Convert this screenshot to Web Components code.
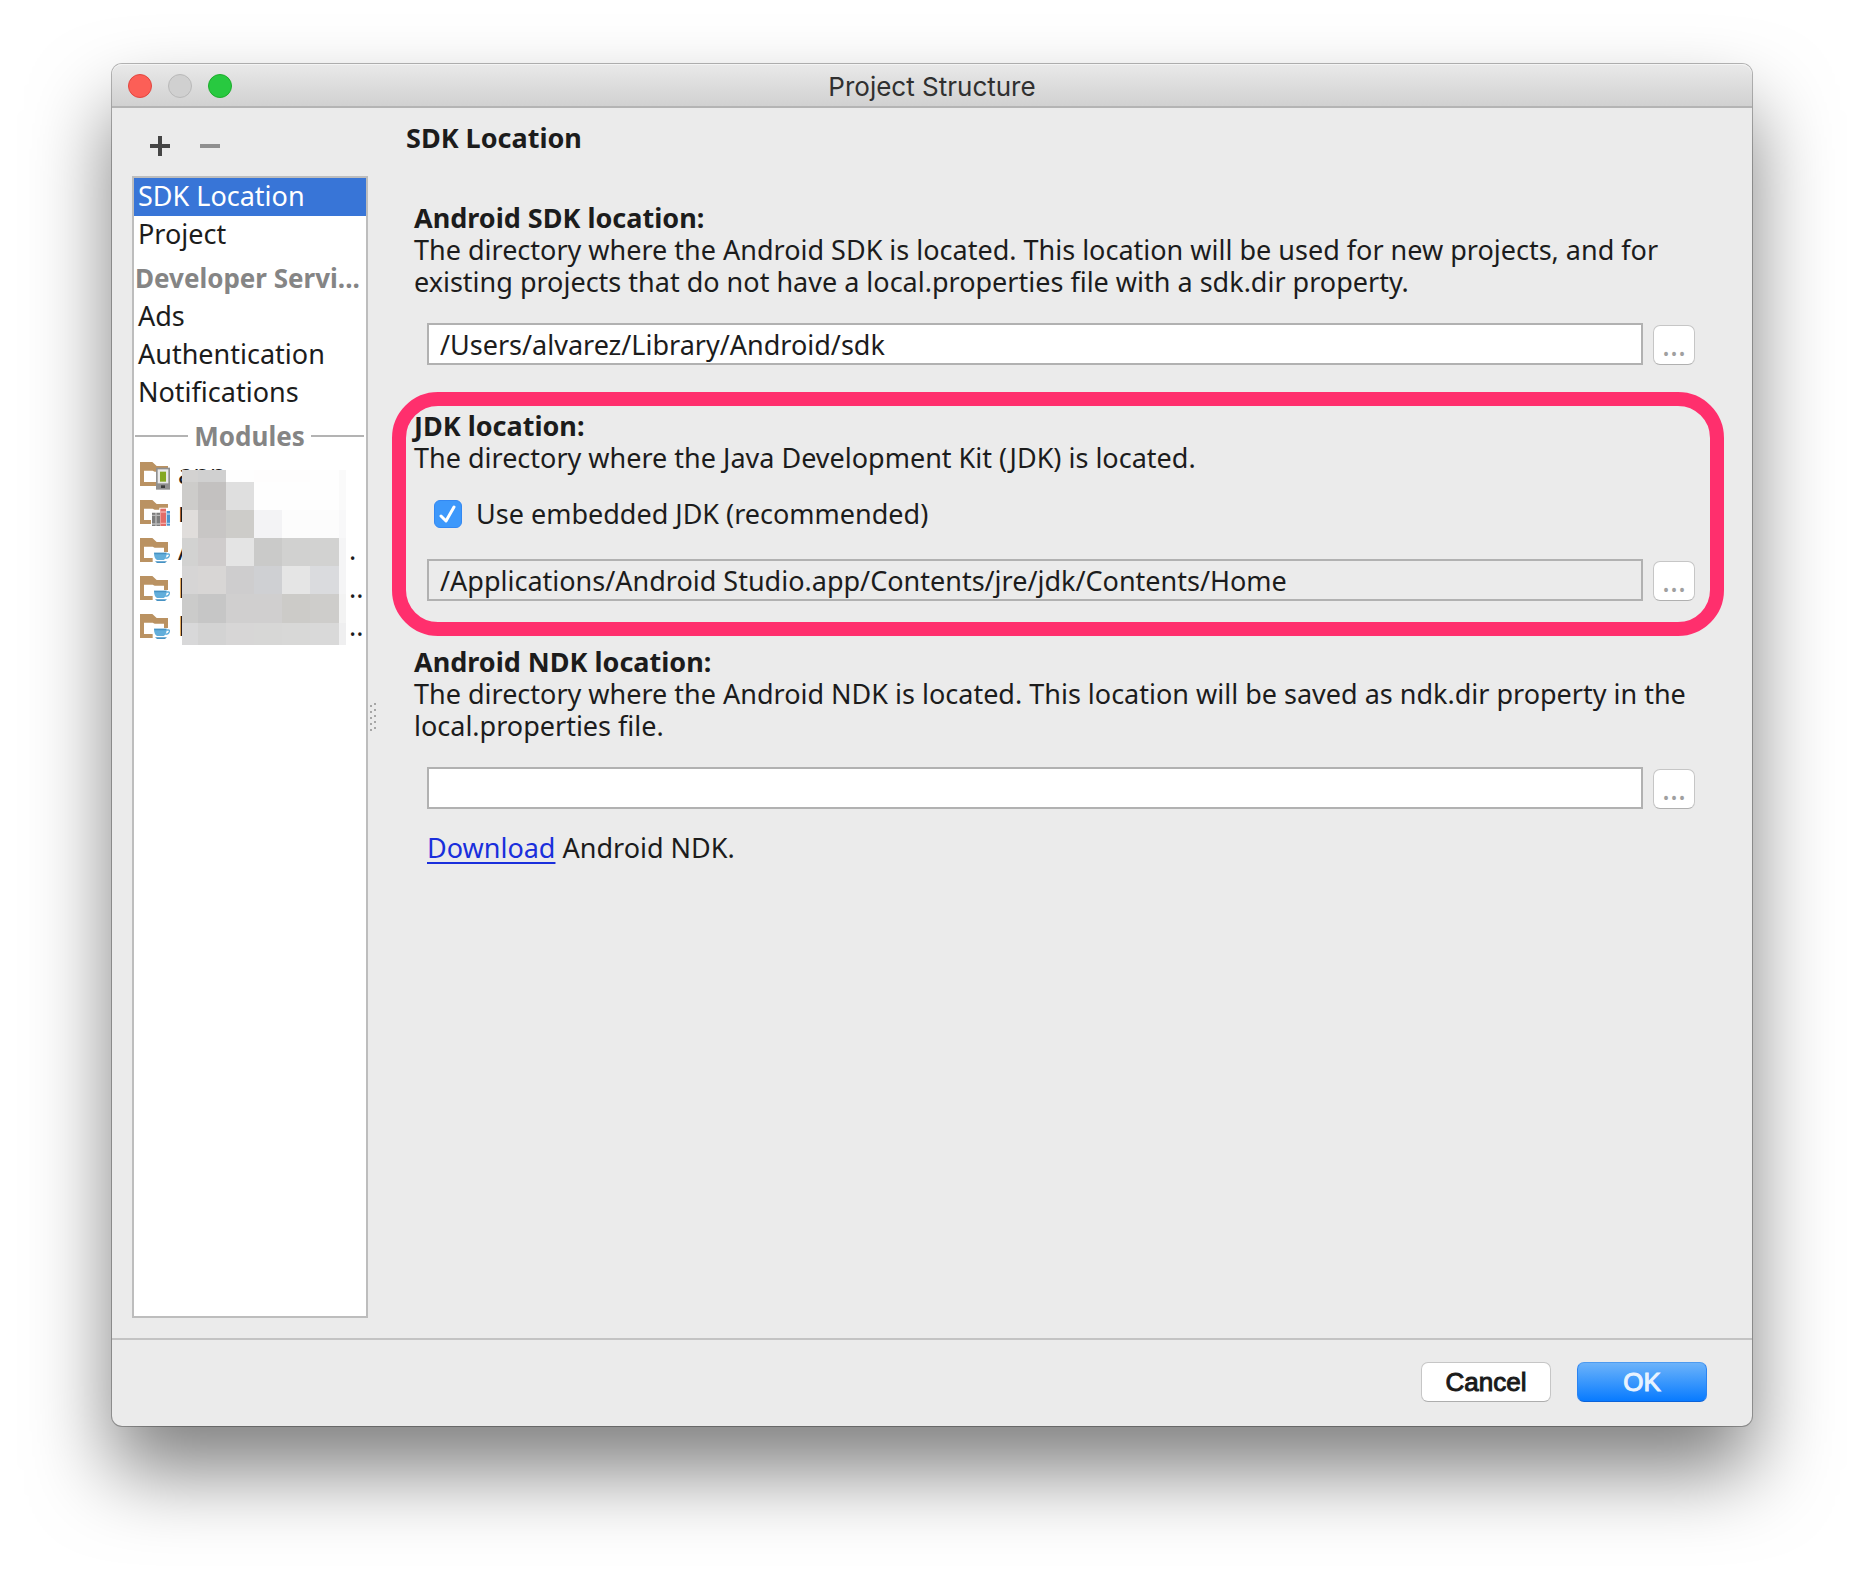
<!DOCTYPE html>
<html lang="en">
<head>
<meta charset="utf-8">
<title>Project Structure</title>
<style>
    body {
        margin: 0;
        background: #fff;
        color: #1c1c1c;
        font: 400 27px/32px "Noto Sans", "Open Sans", sans-serif;
    }
</style>
</head>
<body>
<dialog-window heading="Project Structure">
    <module-sidebar slot="sidebar">
        <nav-row selected>SDK Location</nav-row>
        <nav-row>Project</nav-row>
        <nav-separator>Developer Servi...</nav-separator>
        <nav-row>Ads</nav-row>
        <nav-row>Authentication</nav-row>
        <nav-row>Notifications</nav-row>
        <nav-separator ruled>Modules</nav-separator>
        <nav-row icon="phone">app</nav-row>
        <nav-row icon="library">m</nav-row>
        <nav-row icon="cup">A<span slot="tail">.</span></nav-row>
        <nav-row icon="cup">E<span slot="tail">..</span></nav-row>
        <nav-row icon="cup">E<span slot="tail">..</span></nav-row>
    </module-sidebar>

    <settings-page heading="SDK Location">
        <location-section heading="Android SDK location:" value="/Users/alvarez/Library/Android/sdk">
            <span slot="description">The directory where the Android SDK is located. This location will be used for new projects, and for<br>existing projects that do not have a local.properties file with a sdk.dir property.</span>
        </location-section>
        <location-section heading="JDK location:" value="/Applications/Android Studio.app/Contents/jre/jdk/Contents/Home" locked highlighted>
            <span slot="description">The directory where the Java Development Kit (JDK) is located.</span>
            <check-option slot="option" label="Use embedded JDK (recommended)" checked></check-option>
        </location-section>
        <location-section heading="Android NDK location:" value="">
            <span slot="description">The directory where the Android NDK is located. This location will be saved as ndk.dir property in the<br>local.properties file.</span>
            <download-note slot="footer" link="Download">Android NDK.</download-note>
        </location-section>
    </settings-page>

    <push-button slot="actions" label="Cancel"></push-button>
    <push-button slot="actions" label="OK" variant="primary"></push-button>
</dialog-window>

<script>
/**
 * Small base class: renders template() into an open shadow root.
 */
class BaseElement extends HTMLElement {
    constructor() {
        super();
        this.attachShadow({ mode: "open" });
    }

    connectedCallback() {
        this.shadowRoot.innerHTML = this.template();
    }

    attr(name) {
        return this.getAttribute(name) || "";
    }
}

/**
 * Dialog frame with title bar, sidebar, content and action bar.
 *
 * Slots: sidebar, default, actions
 */
class DialogWindow extends BaseElement {
    template() {
        return `
      <style>
        :host {
          display: flex;
          box-sizing: border-box;
          min-height: 100vh;
          padding: 64px 112px 160px;
        }

        .window {
          flex: 1;
          min-width: 0;
          display: flex;
          flex-direction: column;
          border-radius: 10px;
          background: #ebebeb;
          box-shadow: 0 0 0 1px rgba(0, 0, 0, 0.28), 0 45px 80px rgba(0, 0, 0, 0.5);
        }

        header {
          display: grid;
          grid-template-columns: 1fr auto 1fr;
          align-items: center;
          box-sizing: border-box;
          height: 44px;
          padding: 2px 16px 0;
          border-bottom: 2px solid #b4b4b4;
          border-radius: 10px 10px 0 0;
          background: linear-gradient(#e9e9e9, #d1d1d1);
          box-shadow: inset 0 1px #f4f4f4;
        }

        .lights {
          display: flex;
          gap: 16px;
        }

        .lights button {
          width: 24px;
          height: 24px;
          padding: 0;
          border: 1px solid #b9b9b9;
          border-radius: 50%;
          background: #d0d0d0;
        }

        .lights .close {
          border-color: #e2463f;
          background: #fc5f57;
        }

        .lights .zoom {
          border-color: #1dad2b;
          background: #28c940;
        }

        h1 {
          margin: 0;
          padding-top: 2px;
          color: #303030;
          font: 400 26px/32px Inter, Roboto, sans-serif;
        }

        .body {
          flex: 1;
          display: flex;
        }

        main {
          flex: 1;
          min-width: 0;
        }

        .grip {
          align-self: center;
          flex: none;
          width: 6px;
          height: 28px;
          margin: 0 0 12px 2px;
          fill: #a6a6a6;
        }

        footer {
          display: flex;
          justify-content: flex-end;
          gap: 26px;
          padding: 22px 45px 24px;
          border-top: 2px solid #c3c3c3;
        }
      </style>
      <div class="window">
        <header>
          <div class="lights">
            <button class="close" type="button" aria-label="Close"></button>
            <button type="button" aria-label="Minimize" disabled></button>
            <button class="zoom" type="button" aria-label="Zoom"></button>
          </div>
          <h1>${this.attr("heading")}</h1>
        </header>
        <div class="body">
          <slot name="sidebar"></slot>
          <svg class="grip" viewBox="0 0 6 28">
            ${[0, 6, 12, 18, 24].map((y) => `<rect y="${y + 2}" width="2" height="2"/><rect x="4" y="${y}" width="2" height="2"/>`).join("")}
          </svg>
          <main><slot></slot></main>
        </div>
        <footer><slot name="actions"></slot></footer>
      </div>
    `;
    }
}

/**
 * Left column: add/remove toolbar and the list.
 */
class ModuleSidebar extends BaseElement {
    template() {
        // column and row edges of the mosaic over the module names
        const xs = [0, 16, 44, 72, 100, 128, 157, 164];
        const ys = [0, 12, 40, 68, 96, 124, 153, 175];
        const colors = [
            ["#d3d2d1", "#d0d0d0", "#fefefe", "#fefdfd", "#fefdfd", "#fefefe", "#fafafa"],
            ["#cdccca", "#c3c1c0", "#dfdfdf", "#fefefe", "#fefefe", "#fefefe", "#fafafa"],
            ["#e0dddb", "#c8c6c5", "#cdccc9", "#f3f3f5", "#fcfcfc", "#fcfcfc", "#f8f8f9"],
            ["#d2d2d1", "#cfcccc", "#e4e4e4", "#cacac9", "#d1d1d0", "#d2d2d1", "#f5f5f6"],
            ["#d6d5d5", "#d8d6d5", "#cecdce", "#cfd0d3", "#e5e5e5", "#dadbde", "#f5f5f6"],
            ["#cbcbca", "#c6c6c6", "#d0cfcf", "#d0cfcf", "#cccbc8", "#cecdcb", "#f3f3f3"],
            ["#d8d8d9", "#d3d3d3", "#d7d6d6", "#d7d7d6", "#d8d8d7", "#d9d9d9", "#efeff0"],
        ];
        const cells = colors.map((row, r) => row.map((color, c) =>
            `<rect x="${xs[c]}" y="${ys[r]}" width="${xs[c + 1] - xs[c]}" height="${ys[r + 1] - ys[r]}" fill="${color}"/>`
        ).join("")).join("");

        return `
      <style>
        :host {
          flex: none;
          display: flex;
          flex-direction: column;
          width: 236px;
          padding: 18px 0 20px 20px;
        }

        .toolbar {
          display: flex;
          gap: 10px;
          height: 40px;
          margin-bottom: 10px;
          padding-left: 8px;
        }

        .toolbar button {
          display: grid;
          place-items: center;
          width: 40px;
          height: 40px;
          padding: 0;
          border: 0;
          background: none;
        }

        .list {
          position: relative;
          flex: 1;
          border: 2px solid #bdbdbd;
          background: #fff;
        }

        .mosaic {
          position: absolute;
          top: 292px;
          left: 48px;
        }
      </style>
      <div class="toolbar">
        <button type="button" aria-label="Add">
          <svg width="20" height="20" fill="#454545"><path d="M8 0h4v8h8v4h-8v8H8v-8H0V8h8z"/></svg>
        </button>
        <button type="button" aria-label="Remove">
          <svg width="20" height="20" fill="#8f8f8f"><path d="M0 8h20v4H0z"/></svg>
        </button>
      </div>
      <div class="list">
        <slot></slot>
        <svg class="mosaic" width="164" height="175" shape-rendering="crispEdges">${cells}</svg>
      </div>
    `;
    }
}

// badges drawn over the lower right corner of the folder
const BADGES = {
    phone: `
      <rect x="48" y="20" width="42" height="66" fill="#8f8f8f"/>
      <rect x="53" y="25" width="32" height="42" fill="#e9e9e9"/>
      <rect x="60" y="32" width="18" height="30" fill="#85a822"/>
      <rect x="63" y="73" width="12" height="8" fill="#3c3c3c"/>`,
    library: `
      <path fill="#fff" d="M33 38h25V26h32v62H33z"/>
      <path fill="#7d7d7d" d="M36 41h11v40H36zM49 41h11v40H49z"/>
      <path fill="#b9b9b9" d="M36 47h24v4H36zM36 73h24v4H36z"/>
      <path fill="#e26c68" d="M61 29h17v52H61z"/>
      <path fill="#f3aaa6" d="M61 37h17v4H61zM61 71h17v4H61z"/>
      <path fill="#4c94cc" d="M80 36h10v44H80z"/>
      <path fill="#a9cdea" d="M80 43h10v4H80zM80 71h10v4H80z"/>`,
    cup: `
      <path fill="#fff" d="M38 45h52v34H38z"/>
      <path fill="#62aedb" d="M42 47h38c0 12-3 18-9 22h-20c-6-4-9-10-9-22z"/>
      <path fill="#4792c3" d="M42 47h38l-2 5H44zM45 73h36l-6 5H51z"/>
      <path fill="none" stroke="#62aedb" stroke-width="4" d="M78 51h8q3 0 2 5-2 8-12 8"/>`,
};

/**
 * One selectable row of the list.
 */
class NavRow extends BaseElement {
    template() {
        const icon = this.attr("icon");
        const folder = icon ? `
          <svg width="30" height="31" viewBox="0 0 90 93">
            <path fill="#ba9262" fill-rule="evenodd" d="M0 3h37l13 12h34v60H0zM12 29v34h60V32H44l-6-3z"/>
            ${BADGES[icon]}
          </svg>` : "";

        return `
      <style>
        :host {
          display: block;
        }

        button {
          display: flex;
          align-items: center;
          width: 100%;
          height: 38px;
          padding: 0 0 0 4px;
          border: 0;
          background: none;
          color: #1c1c1c;
          font: inherit;
          text-align: left;
          white-space: nowrap;
        }

        :host([selected]) button {
          background: #3875d7;
          color: #fff;
        }

        svg {
          flex: none;
          margin: 2px 8px 0 2px;
        }

        .label,
        .tail {
          padding-bottom: 2px;
        }

        .label {
          flex: 1;
        }

        .tail {
          width: 17px;
        }
      </style>
      <button type="button">${folder}<span class="label"><slot></slot></span><span class="tail"><slot name="tail"></slot></span></button>
    `;
    }
}

/**
 * Grey group caption, with a rule on both sides when "ruled" is set.
 */
class NavSeparator extends BaseElement {
    template() {
        return `
      <style>
        :host {
          display: flex;
          align-items: center;
          gap: 6px;
          height: 44px;
          padding: 4px 2px 0 1px;
          box-sizing: border-box;
          overflow: hidden;
          color: #858585;
          font-size: 26px;
          font-weight: 700;
          white-space: nowrap;
        }

        :host([ruled])::before,
        :host([ruled])::after {
          content: "";
          flex: 1;
          height: 2px;
          background: #b3b3b3;
        }
      </style>
      <slot></slot>
    `;
    }
}

class SettingsPage extends BaseElement {
    template() {
        return `
      <style>
        :host {
          display: block;
          padding: 14px 57px 0 38px;
        }

        h2 {
          margin: 0 0 48px -8px;
          font: inherit;
          font-weight: 700;
        }

        .sections {
          display: flex;
          flex-direction: column;
          gap: 45px;
        }
      </style>
      <h2>${this.attr("heading")}</h2>
      <div class="sections"><slot></slot></div>
    `;
    }
}

/**
 * Caption, description and path field with a browse button.
 *
 * Slots: description, option, footer
 */
class LocationSection extends BaseElement {
    template() {
        const readonly = this.hasAttribute("locked") ? "readonly" : "";

        return `
      <style>
        :host {
          display: block;
          position: relative;
        }

        :host([highlighted])::after {
          content: "";
          position: absolute;
          inset: -18px -29px -35px -22px;
          border: 14px solid #ff2f6d;
          border-radius: 46px;
          pointer-events: none;
        }

        label {
          display: block;
          font-weight: 700;
        }

        .description {
          margin-right: -20px;
        }

        .field {
          display: flex;
          align-items: flex-end;
          gap: 10px;
          margin: 25px 0 0 13px;
        }

        input {
          flex: 1;
          min-width: 0;
          box-sizing: border-box;
          height: 42px;
          padding: 0 11px;
          border: 2px solid #b1b1b1;
          border-radius: 0;
          outline: 0;
          background: #fff;
          color: #1c1c1c;
          font: inherit;
        }

        input[readonly] {
          background: #ebebeb;
        }

        .field button {
          width: 42px;
          height: 40px;
          padding: 0;
          border: 1px solid #c6c6c6;
          border-bottom-color: #b0b0b0;
          border-radius: 7px;
          background: #fff;
          color: #a0a0a0;
          font: 30px/38px "Noto Sans", sans-serif;
        }
      </style>
      <label for="path">${this.attr("heading")}</label>
      <div class="description"><slot name="description"></slot></div>
      <slot name="option"></slot>
      <div class="field">
        <input id="path" type="text" value="${this.attr("value")}" spellcheck="false" ${readonly}>
        <button type="button" aria-label="Browse">...</button>
      </div>
      <slot name="footer"></slot>
    `;
    }
}

class CheckOption extends BaseElement {
    template() {
        const checked = this.hasAttribute("checked") ? "checked" : "";

        return `
      <style>
        :host {
          display: block;
          margin: 24px 0 29px 20px;
        }

        label {
          display: flex;
          align-items: center;
          gap: 14px;
        }

        .box {
          display: grid;
        }

        input,
        svg {
          grid-area: 1 / 1;
          width: 28px;
          height: 28px;
          margin: 0;
        }

        input {
          appearance: none;
          border: 1px solid #b5b5b5;
          border-radius: 6px;
          background: #fff;
        }

        input:checked {
          border-color: #3388f2;
          background: #3d98fb;
        }

        svg {
          fill: none;
          stroke: #fff;
          stroke-width: 3;
          stroke-linecap: round;
          stroke-linejoin: round;
          pointer-events: none;
        }

        input:not(:checked) + svg {
          visibility: hidden;
        }
      </style>
      <label>
        <span class="box"><input type="checkbox" ${checked}><svg viewBox="0 0 28 28"><path d="M7 16l5 5L20 7"/></svg></span>
        ${this.attr("label")}
      </label>
    `;
    }
}

class DownloadNote extends BaseElement {
    template() {
        return `
      <style>
        :host {
          display: block;
          margin: 23px 0 0 13px;
        }

        a {
          color: #1a2fdc;
          text-decoration-thickness: 2px;
          text-underline-offset: 4px;
        }
      </style>
      <a href="#">${this.attr("link")}</a> <slot></slot>
    `;
    }
}

/**
 * Push button. Attributes: label, variant ("primary").
 */
class PushButton extends BaseElement {
    template() {
        return `
      <style>
        :host {
          display: block;
        }

        button {
          width: 130px;
          height: 40px;
          padding: 0;
          border: 1px solid #c6c6c6;
          border-bottom-color: #adadad;
          border-radius: 7px;
          background: #fff;
          color: #1a1a1a;
          font: 26px/38px "Liberation Sans", Arial, sans-serif;
          -webkit-text-stroke: 1px;
        }

        :host([variant="primary"]) button {
          border-color: #4d9bf0 #2a83f2 #0b62d8;
          background: linear-gradient(#6cb3fa, #087bff);
          color: #e9f3ff;
        }
      </style>
      <button type="button">${this.attr("label")}</button>
    `;
    }
}

customElements.define("dialog-window", DialogWindow);
customElements.define("module-sidebar", ModuleSidebar);
customElements.define("nav-row", NavRow);
customElements.define("nav-separator", NavSeparator);
customElements.define("settings-page", SettingsPage);
customElements.define("location-section", LocationSection);
customElements.define("check-option", CheckOption);
customElements.define("download-note", DownloadNote);
customElements.define("push-button", PushButton);
</script>
</body>
</html>
